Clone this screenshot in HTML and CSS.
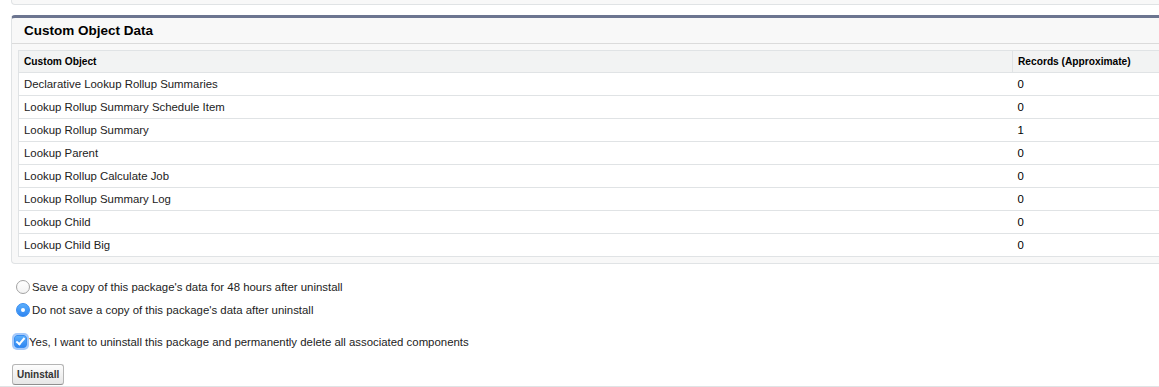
FILE: index.html
```html
<!DOCTYPE html>
<html lang="en">
<head>
  <meta charset="UTF-8">
  <title>Uninstall Package</title>
  <link rel="stylesheet" href="styles.css">
</head>
<body>
  <div class="prev_block"></div>

  <div class="pb_panel">
    <div class="pb_header">
      <h2 class="pb_title">Custom Object Data</h2>
    </div>
    <table class="list">
      <tr class="header_row">
        <th class="col_name">Custom Object</th>
        <th class="col_count">Records (Approximate)</th>
      </tr>
      <tr><td>Declarative Lookup Rollup Summaries</td><td class="num">0</td></tr>
      <tr><td>Lookup Rollup Summary Schedule Item</td><td class="num">0</td></tr>
      <tr><td>Lookup Rollup Summary</td><td class="num">1</td></tr>
      <tr><td>Lookup Parent</td><td class="num">0</td></tr>
      <tr><td>Lookup Rollup Calculate Job</td><td class="num">0</td></tr>
      <tr><td>Lookup Rollup Summary Log</td><td class="num">0</td></tr>
      <tr><td>Lookup Child</td><td class="num">0</td></tr>
      <tr><td>Lookup Child Big</td><td class="num">0</td></tr>
    </table>
  </div>

  <div class="options">
    <label class="opt">
      <input type="radio" name="save_data" class="radio">
      <span>Save a copy of this package's data for 48 hours after uninstall</span>
    </label>
    <label class="opt">
      <input type="radio" name="save_data" class="radio" checked>
      <span>Do not save a copy of this package's data after uninstall</span>
    </label>
    <label class="opt opt_confirm">
      <input type="checkbox" class="check" checked>
      <span>Yes, I want to uninstall this package and permanently delete all associated components</span>
    </label>
    <div class="btn_row">
      <button class="btn">Uninstall</button>
    </div>
  </div>

  <div class="next_block"></div>
</body>
</html>
```

FILE: styles.css
```css
html, body {
  margin: 0;
  padding: 0;
  overflow: hidden;
}
body {
  font-family: "Liberation Sans", Arial, Helvetica, sans-serif;
  font-size: 11.4px;
  color: #222;
  background-color: #fff;
}
.prev_block {
  margin-left: 11px;
  height: 4px;
  background-color: #f8f8f8;
  border-left: 1px solid #e0e3e5;
  border-bottom: 1px solid #e0e3e5;
  border-bottom-left-radius: 4px;
}
.pb_panel {
  margin-top: 10px;
  margin-left: 11px;
  padding-bottom: 6px;
  background-color: #f8f8f8;
  border-top: 3px solid #6c7590;
  border-left: 1px solid #e0e3e5;
  border-bottom: 1px solid #e0e3e5;
  border-radius: 4px 0 0 4px;
}
.pb_header {
  height: 25px;
  border-bottom: 1px solid #dbdbdb;
  margin-bottom: 6px;
}
.pb_title {
  margin: 0;
  padding-left: 12px;
  font-size: 13.5px;
  line-height: 25px;
  font-weight: bold;
  color: #000;
}
.list {
  margin-left: 6px;
  width: calc(100% - 6px);
  border-collapse: collapse;
  background-color: #fff;
  border-top: 1px solid #e0e3e5;
  border-left: 1px solid #e0e3e5;
}
.list td,
.list th {
  padding: 4px 2px 4px 5px;
  line-height: 14px;
  text-align: left;
  vertical-align: middle;
  border-bottom: 1px solid #e0e3e5;
}
.header_row th {
  padding: 4px 2px 3px 5px;
  background-color: #f2f3f3;
  font-size: 10.2px;
  font-weight: bold;
  color: #000;
}
.col_name {
  width: 986px;
}
.col_count {
  border-left: 1px solid #e0e3e5;
}
.num {
  color: #000;
}
.options {
  margin-top: 11px;
}
.opt {
  display: flex;
  align-items: center;
  height: 23px;
  padding-left: 16px;
  color: #222;
}
.opt_confirm {
  margin-top: 9px;
  padding-left: 14px;
}
.radio {
  -webkit-appearance: none;
  appearance: none;
  width: 14px;
  height: 14px;
  margin: 0 2px 0 0;
  border: 1px solid #a3a3a3;
  border-radius: 50%;
  background: linear-gradient(#fff, #f3f3f3);
  box-sizing: border-box;
  position: relative;
}
.radio:checked {
  border-color: #3a8ef0;
  background: linear-gradient(#5aaefc, #2f86f2);
}
.radio:checked::after {
  content: "";
  position: absolute;
  left: 4px;
  top: 4px;
  width: 4px;
  height: 4px;
  border-radius: 50%;
  background-color: #fff;
}
.check {
  -webkit-appearance: none;
  appearance: none;
  width: 13px;
  height: 13px;
  margin: 0 2px 0 0;
  border: 1px solid #3a8ef0;
  border-radius: 3px;
  background: linear-gradient(#5aaefc, #2f86f2);
  box-sizing: border-box;
  box-shadow: 0 0 0 2px rgba(90, 155, 245, 0.55);
  position: relative;
}
.check:checked::after {
  content: "";
  position: absolute;
  left: 3px;
  top: 0px;
  width: 3px;
  height: 7px;
  border-right: 2px solid #fff;
  border-bottom: 2px solid #fff;
  transform: rotate(40deg);
}
.btn_row {
  margin-top: 11px;
  padding-left: 12px;
  height: 22px;
}
.btn {
  height: 21px;
  padding: 0 4px;
  margin: 0;
  font-family: "Liberation Sans", Arial, Helvetica, sans-serif;
  font-size: 10px;
  font-weight: bold;
  color: #333;
  background: linear-gradient(#fdfdfd, #e6e6e6);
  border: 1px solid #b5b5b5;
  border-bottom-color: #8f8f8f;
  border-radius: 3px;
  cursor: pointer;
}
.next_block {
  border-top: 1px solid #e0e3e5;
}
```
